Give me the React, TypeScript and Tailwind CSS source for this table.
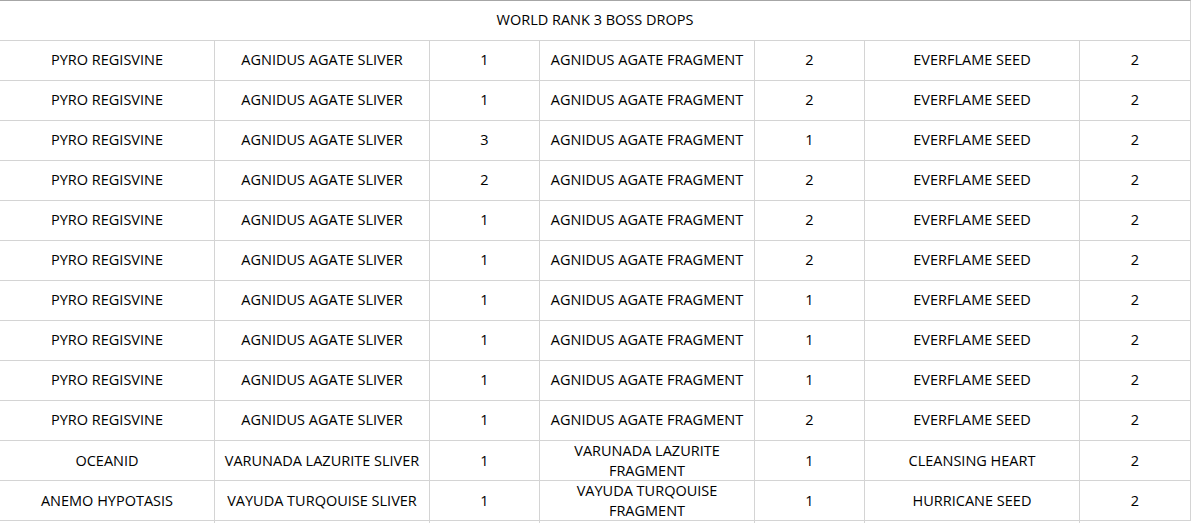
const ROWS: string[][] = [
  ['PYRO REGISVINE', 'AGNIDUS AGATE SLIVER', '1', 'AGNIDUS AGATE FRAGMENT', '2', 'EVERFLAME SEED', '2'],
  ['PYRO REGISVINE', 'AGNIDUS AGATE SLIVER', '1', 'AGNIDUS AGATE FRAGMENT', '2', 'EVERFLAME SEED', '2'],
  ['PYRO REGISVINE', 'AGNIDUS AGATE SLIVER', '3', 'AGNIDUS AGATE FRAGMENT', '1', 'EVERFLAME SEED', '2'],
  ['PYRO REGISVINE', 'AGNIDUS AGATE SLIVER', '2', 'AGNIDUS AGATE FRAGMENT', '2', 'EVERFLAME SEED', '2'],
  ['PYRO REGISVINE', 'AGNIDUS AGATE SLIVER', '1', 'AGNIDUS AGATE FRAGMENT', '2', 'EVERFLAME SEED', '2'],
  ['PYRO REGISVINE', 'AGNIDUS AGATE SLIVER', '1', 'AGNIDUS AGATE FRAGMENT', '2', 'EVERFLAME SEED', '2'],
  ['PYRO REGISVINE', 'AGNIDUS AGATE SLIVER', '1', 'AGNIDUS AGATE FRAGMENT', '1', 'EVERFLAME SEED', '2'],
  ['PYRO REGISVINE', 'AGNIDUS AGATE SLIVER', '1', 'AGNIDUS AGATE FRAGMENT', '1', 'EVERFLAME SEED', '2'],
  ['PYRO REGISVINE', 'AGNIDUS AGATE SLIVER', '1', 'AGNIDUS AGATE FRAGMENT', '1', 'EVERFLAME SEED', '2'],
  ['PYRO REGISVINE', 'AGNIDUS AGATE SLIVER', '1', 'AGNIDUS AGATE FRAGMENT', '2', 'EVERFLAME SEED', '2'],
  ['OCEANID', 'VARUNADA LAZURITE SLIVER', '1', 'VARUNADA LAZURITE FRAGMENT', '1', 'CLEANSING HEART', '2'],
  ['ANEMO HYPOTASIS', 'VAYUDA TURQOUISE SLIVER', '1', 'VAYUDA TURQOUISE FRAGMENT', '1', 'HURRICANE SEED', '2'],
];

export default function App() {
  return (
    <div className="bg-white min-h-[523px] font-['Open_Sans',sans-serif] text-[14.5px] leading-5 text-black">
      <div className="w-[1191px] border-t border-t-[#a6a6a6] border-r border-r-[#d4d4d4]">
        <div className="h-10 flex items-center justify-center pb-[2px] border-b border-[#d4d4d4]">
          WORLD RANK 3 BOSS DROPS
        </div>
        {ROWS.map((row, r) => (
          <div
            key={r}
            className="grid grid-cols-[215px_215px_110px_215px_110px_215px_110px] h-10 border-b border-[#d4d4d4]"
          >
            {row.map((cell, c) => (
              <div
                key={c}
                className={`flex items-center justify-center text-center px-2 pb-[2px] ${
                  c < 6 ? 'border-r border-[#d4d4d4]' : ''
                }`}
              >
                {cell}
              </div>
            ))}
          </div>
        ))}
      </div>
    </div>
  );
}
